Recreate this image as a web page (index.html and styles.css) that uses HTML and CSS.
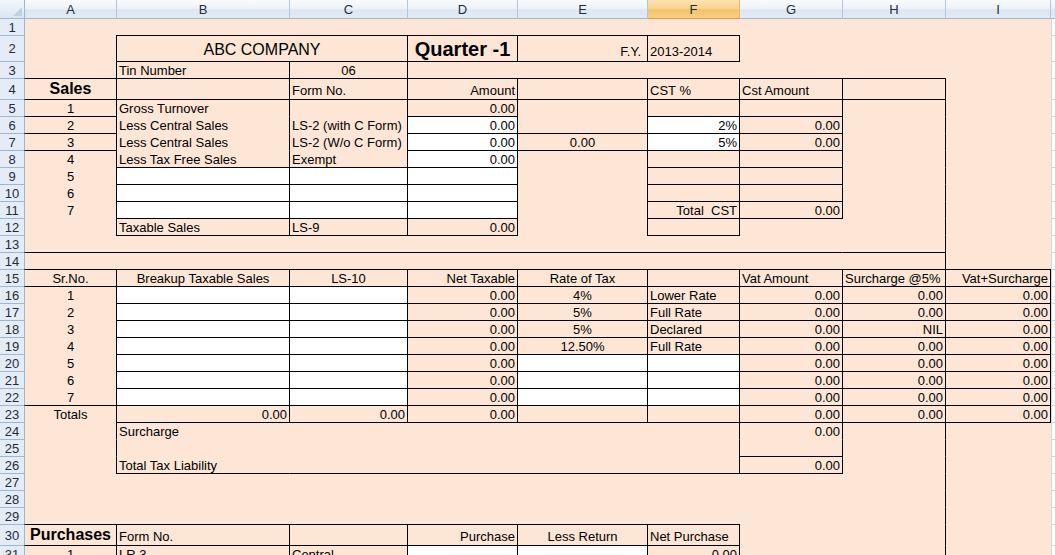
FILE: index.html
```html
<!DOCTYPE html>
<html>
<head>
<meta charset="utf-8">
<title>Sheet</title>
<link rel="stylesheet" href="styles.css">
</head>
<body>
<div class="sheet">
  <!-- column headers -->
  <div class="corner"><span class="tri"></span></div>
  <div class="ch">A</div><div class="ch">B</div><div class="ch">C</div><div class="ch">D</div><div class="ch">E</div><div class="ch sel">F</div><div class="ch">G</div><div class="ch">H</div><div class="ch">I</div><div class="ch chj"></div>

  <!-- 1 -->
  <div class="rh">1</div><div class="c s9"></div><div class="j"></div>

  <!-- 2 -->
  <div class="rh">2</div>
  <div class="c"></div>
  <div class="c s2 a ct big r2">ABC COMPANY</div>
  <div class="c a ct q r2">Quarter -1</div>
  <div class="c a rt fy r2">F.Y.</div>
  <div class="c a r2">2013-2014</div>
  <div class="c s3"></div>
  <div class="j"></div>

  <!-- 3 -->
  <div class="rh">3</div>
  <div class="c"></div>
  <div class="c a">Tin Number</div>
  <div class="c a ct">06</div>
  <div class="c s3 t"></div>
  <div class="c s3"></div>
  <div class="j"></div>

  <!-- 4 -->
  <div class="rh">4</div>
  <div class="c t b r ct hd pb">Sales</div>
  <div class="c a"></div>
  <div class="c a pb">Form No.</div>
  <div class="c a rt pb">Amount</div>
  <div class="c a"></div>
  <div class="c a pb">CST %</div>
  <div class="c a pb">Cst Amount</div>
  <div class="c a"></div>
  <div class="c"></div>
  <div class="j"></div>

  <!-- 5 -->
  <div class="rh">5</div>
  <div class="c b r ct">1</div>
  <div class="c l">Gross Turnover</div>
  <div class="c l r"></div>
  <div class="c a rt">0.00</div>
  <div class="c l r"></div>
  <div class="c a"></div>
  <div class="c a"></div>
  <div class="c l r"></div>
  <div class="c"></div>
  <div class="j"></div>

  <!-- 6 -->
  <div class="rh">6</div>
  <div class="c b r ct">2</div>
  <div class="c l">Less Central Sales</div>
  <div class="c l r">LS-2 (with C Form)</div>
  <div class="c a w rt">0.00</div>
  <div class="c l r"></div>
  <div class="c a w rt">2%</div>
  <div class="c a rt">0.00</div>
  <div class="c l r"></div>
  <div class="c"></div>
  <div class="j"></div>

  <!-- 7 -->
  <div class="rh">7</div>
  <div class="c b r ct">3</div>
  <div class="c l">Less Central Sales</div>
  <div class="c l r">LS-2 (W/o C Form)</div>
  <div class="c a w rt">0.00</div>
  <div class="c a ct">0.00</div>
  <div class="c a w rt">5%</div>
  <div class="c a rt">0.00</div>
  <div class="c l r"></div>
  <div class="c"></div>
  <div class="j"></div>

  <!-- 8 -->
  <div class="rh">8</div>
  <div class="c r ct">4</div>
  <div class="c l">Less Tax Free Sales</div>
  <div class="c l r">Exempt</div>
  <div class="c a w rt">0.00</div>
  <div class="c l r"></div>
  <div class="c a"></div>
  <div class="c a"></div>
  <div class="c l r"></div>
  <div class="c"></div>
  <div class="j"></div>

  <!-- 9 -->
  <div class="rh">9</div>
  <div class="c r ct">5</div>
  <div class="c a w"></div>
  <div class="c a w"></div>
  <div class="c a w"></div>
  <div class="c l r"></div>
  <div class="c a"></div>
  <div class="c a"></div>
  <div class="c l r"></div>
  <div class="c"></div>
  <div class="j"></div>

  <!-- 10 -->
  <div class="rh">10</div>
  <div class="c r ct">6</div>
  <div class="c a w"></div>
  <div class="c a w"></div>
  <div class="c a w"></div>
  <div class="c l r"></div>
  <div class="c a"></div>
  <div class="c a"></div>
  <div class="c l r"></div>
  <div class="c"></div>
  <div class="j"></div>

  <!-- 11 -->
  <div class="rh">11</div>
  <div class="c r ct">7</div>
  <div class="c a w"></div>
  <div class="c a w"></div>
  <div class="c a w"></div>
  <div class="c l r"></div>
  <div class="c a rt">Total&nbsp;&nbsp;CST</div>
  <div class="c a rt">0.00</div>
  <div class="c l r"></div>
  <div class="c"></div>
  <div class="j"></div>

  <!-- 12 -->
  <div class="rh">12</div>
  <div class="c r"></div>
  <div class="c a">Taxable Sales</div>
  <div class="c a">LS-9</div>
  <div class="c a rt">0.00</div>
  <div class="c l r"></div>
  <div class="c a"></div>
  <div class="c"></div>
  <div class="c r"></div>
  <div class="c"></div>
  <div class="j"></div>

  <!-- 13 -->
  <div class="rh">13</div>
  <div class="c s7"></div>
  <div class="c r"></div>
  <div class="c"></div>
  <div class="j"></div>

  <!-- 14 -->
  <div class="rh">14</div>
  <div class="c s7 t"></div>
  <div class="c t r"></div>
  <div class="c"></div>
  <div class="j"></div>

  <!-- 15 -->
  <div class="rh">15</div>
  <div class="c t b r ct">Sr.No.</div>
  <div class="c a ct">Breakup Taxable Sales</div>
  <div class="c a ct">LS-10</div>
  <div class="c a rt">Net Taxable</div>
  <div class="c a ct">Rate of Tax</div>
  <div class="c a"></div>
  <div class="c a">Vat Amount</div>
  <div class="c a">Surcharge @5%</div>
  <div class="c a rt">Vat+Surcharge</div>
  <div class="j"></div>

  <!-- 16 -->
  <div class="rh">16</div>
  <div class="c r ct">1</div>
  <div class="c a w"></div>
  <div class="c a w"></div>
  <div class="c a rt">0.00</div>
  <div class="c a ct">4%</div>
  <div class="c a">Lower Rate</div>
  <div class="c a rt">0.00</div>
  <div class="c a rt">0.00</div>
  <div class="c a rt">0.00</div>
  <div class="j"></div>

  <!-- 17 -->
  <div class="rh">17</div>
  <div class="c r ct">2</div>
  <div class="c a w"></div>
  <div class="c a w"></div>
  <div class="c a rt">0.00</div>
  <div class="c a ct">5%</div>
  <div class="c a">Full Rate</div>
  <div class="c a rt">0.00</div>
  <div class="c a rt">0.00</div>
  <div class="c a rt">0.00</div>
  <div class="j"></div>

  <!-- 18 -->
  <div class="rh">18</div>
  <div class="c r ct">3</div>
  <div class="c a w"></div>
  <div class="c a w"></div>
  <div class="c a rt">0.00</div>
  <div class="c a ct">5%</div>
  <div class="c a">Declared</div>
  <div class="c a rt">0.00</div>
  <div class="c a rt">NIL</div>
  <div class="c a rt">0.00</div>
  <div class="j"></div>

  <!-- 19 -->
  <div class="rh">19</div>
  <div class="c r ct">4</div>
  <div class="c a w"></div>
  <div class="c a w"></div>
  <div class="c a rt">0.00</div>
  <div class="c a ct">12.50%</div>
  <div class="c a">Full Rate</div>
  <div class="c a rt">0.00</div>
  <div class="c a rt">0.00</div>
  <div class="c a rt">0.00</div>
  <div class="j"></div>

  <!-- 20 -->
  <div class="rh">20</div>
  <div class="c r ct">5</div>
  <div class="c a w"></div>
  <div class="c a w"></div>
  <div class="c a rt">0.00</div>
  <div class="c a w"></div>
  <div class="c a w"></div>
  <div class="c a rt">0.00</div>
  <div class="c a rt">0.00</div>
  <div class="c a rt">0.00</div>
  <div class="j"></div>

  <!-- 21 -->
  <div class="rh">21</div>
  <div class="c r ct">6</div>
  <div class="c a w"></div>
  <div class="c a w"></div>
  <div class="c a rt">0.00</div>
  <div class="c a w"></div>
  <div class="c a w"></div>
  <div class="c a rt">0.00</div>
  <div class="c a rt">0.00</div>
  <div class="c a rt">0.00</div>
  <div class="j"></div>

  <!-- 22 -->
  <div class="rh">22</div>
  <div class="c r ct">7</div>
  <div class="c a w"></div>
  <div class="c a w"></div>
  <div class="c a rt">0.00</div>
  <div class="c a w"></div>
  <div class="c a w"></div>
  <div class="c a rt">0.00</div>
  <div class="c a rt">0.00</div>
  <div class="c a rt">0.00</div>
  <div class="j"></div>

  <!-- 23 -->
  <div class="rh">23</div>
  <div class="c t r ct">Totals</div>
  <div class="c a rt">0.00</div>
  <div class="c a rt">0.00</div>
  <div class="c a rt">0.00</div>
  <div class="c a"></div>
  <div class="c a"></div>
  <div class="c a rt">0.00</div>
  <div class="c a rt">0.00</div>
  <div class="c a rt">0.00</div>
  <div class="j"></div>

  <!-- 24 -->
  <div class="rh">24</div>
  <div class="c"></div>
  <div class="c t l">Surcharge</div>
  <div class="c s4 t"></div>
  <div class="c t l r rt">0.00</div>
  <div class="c r"></div>
  <div class="c"></div>
  <div class="j"></div>

  <!-- 25 -->
  <div class="rh">25</div>
  <div class="c"></div>
  <div class="c l"></div>
  <div class="c s4"></div>
  <div class="c l r b"></div>
  <div class="c r"></div>
  <div class="c"></div>
  <div class="j"></div>

  <!-- 26 -->
  <div class="rh">26</div>
  <div class="c"></div>
  <div class="c l b">Total Tax Liability</div>
  <div class="c s4 b"></div>
  <div class="c a rt">0.00</div>
  <div class="c r"></div>
  <div class="c"></div>
  <div class="j"></div>

  <!-- 27 -->
  <div class="rh">27</div>
  <div class="c s7"></div>
  <div class="c r"></div>
  <div class="c"></div>
  <div class="j"></div>

  <!-- 28 -->
  <div class="rh">28</div>
  <div class="c s7"></div>
  <div class="c r"></div>
  <div class="c"></div>
  <div class="j"></div>

  <!-- 29 -->
  <div class="rh">29</div>
  <div class="c s7"></div>
  <div class="c r"></div>
  <div class="c"></div>
  <div class="j"></div>

  <!-- 30 -->
  <div class="rh">30</div>
  <div class="c t b r ct hd pb">Purchases</div>
  <div class="c a pb">Form No.</div>
  <div class="c a"></div>
  <div class="c a rt pb">Purchase</div>
  <div class="c a ct pb">Less Return</div>
  <div class="c a pb">Net Purchase</div>
  <div class="c"></div>
  <div class="c r"></div>
  <div class="c"></div>
  <div class="j"></div>

  <!-- 31 -->
  <div class="rh">31</div>
  <div class="c r ct">1</div>
  <div class="c a">LR 3</div>
  <div class="c a">Central</div>
  <div class="c a w"></div>
  <div class="c a w"></div>
  <div class="c a rt">0.00</div>
  <div class="c"></div>
  <div class="c r"></div>
  <div class="c"></div>
  <div class="j"></div>
</div>
</body>
</html>
```

FILE: styles.css
```css
* { box-sizing: border-box; }
html, body {
  margin: 0;
  height: 100%;
  overflow: hidden;
  background: #ffffff;
}
body {
  font-family: "Liberation Sans", Arial, sans-serif;
  font-size: 13px;
  color: #000;
}
.sheet {
  display: grid;
  grid-template-columns: 25px 92px 173px 118px 110px 130px 92px 103px 103px 105px 4px;
  grid-template-rows: 19px 17px 26px 17px 21px repeat(25, 17px) 21px 17px;
  width: 1055px;
  background: #fde6d6;
}

/* headers */
.corner {
  background: linear-gradient(#f3f7fc, #dbe5f1);
  border-right: 1px solid #9eb6ce;
  border-bottom: 1px solid #9eb6ce;
  position: relative;
}
.tri {
  position: absolute;
  right: 2px;
  bottom: 2px;
  width: 0;
  height: 0;
  border-left: 9px solid transparent;
  border-bottom: 9px solid #c1d1e4;
}
.ch {
  background: linear-gradient(#f9fbfd 0%, #eef3f9 45%, #dde6f1 55%, #e3eaf4 100%);
  border-right: 1px solid #b4c6dc;
  border-bottom: 1px solid #9eb6ce;
  display: flex;
  align-items: center;
  justify-content: center;
  color: #1f2d3d;
  font-size: 13px;
}
.ch.sel {
  background: linear-gradient(#fbe3b3 0%, #f8d48f 45%, #f4c36c 55%, #f7cf85 100%);
  border-bottom-color: #f29536;
  border-right-color: #e8b56a;
}
.ch.chj { border-right: 0; }
.rh {
  background: #e4ecf7;
  border-right: 1px solid #9eb6ce;
  border-bottom: 1px solid #9eb6ce;
  display: flex;
  align-items: center;
  justify-content: center;
  color: #1f2d3d;
  font-size: 13px;
  line-height: 15px;
}
.j {
  background: #ffffff;
  border-left: 1px solid #d0d7e5;
  border-bottom: 1px solid #d0d7e5;
}

/* cells */
.c {
  margin: -1px 0 0 -1px;
  border: 1px solid transparent;
  display: flex;
  align-items: flex-end;
  padding: 0 2px;
  line-height: 15px;
  white-space: nowrap;
  overflow: hidden;
  min-width: 0;
}
.a { border-color: #000; }
.t { border-top-color: #000; }
.b { border-bottom-color: #000; }
.l { border-left-color: #000; }
.r { border-right-color: #000; }
.w { background: #ffffff; }
.rt { justify-content: flex-end; }
.ct { justify-content: center; }
.s2 { grid-column: span 2; }
.s3 { grid-column: span 3; }
.s4 { grid-column: span 4; }
.s7 { grid-column: span 7; }
.s9 { grid-column: span 9; }

.pb { padding-bottom: 1px; }
.r2 { padding-bottom: 2px; }
.fy { padding-right: 6px; }
.big { font-size: 16px; line-height: 18px; }
.q { font-size: 20px; font-weight: bold; line-height: 20px; }
.hd { font-size: 16px; font-weight: bold; line-height: 18px; }
```
